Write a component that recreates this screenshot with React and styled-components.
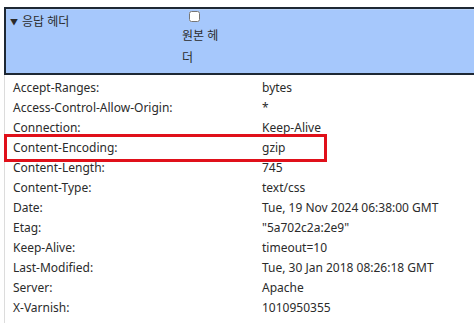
import React from "react";
import styled, { createGlobalStyle } from "styled-components";

const Global = createGlobalStyle`
  html, body { margin: 0; padding: 0; background: #fff; overflow: hidden; }
  body {
    font-family: "Noto Sans", "Noto Sans CJK KR", sans-serif;
    font-size: 12px;
    color: #2b2b2b;
  }
`;

const Panel = styled.div`
  width: 540px;
  padding: 7px 0 0 4px;
`;

const HeaderBar = styled.div`
  display: flex;
  align-items: flex-start;
  height: 64px;
  border: 2px solid #1e2834;
  background: #a6c8fc;
  box-shadow: inset 0 1px 0 #b8d2f8;
`;

const Toggle = styled.div`
  width: 172px;
  padding: 3px 0 0 4px;
  line-height: 20px;
  white-space: nowrap;
`;

const Caret = styled.span`
  font-size: 8px;
  margin-right: 4px;
  vertical-align: 1px;
`;

const RawToggle = styled.label`
  display: flex;
  flex-direction: column;
  align-items: flex-start;
  width: 42px;
`;

const Check = styled.input`
  margin: 2px 0 0 7px;
  width: 11px;
  height: 11px;
`;

const RawLabel = styled.span`
  margin-top: 3px;
  line-height: 22px;
  word-break: break-all;
`;

const Table = styled.div`
  position: relative;
  border-left: 1px solid #dcdcdc;
  padding: 3px 0 10px 8px;
`;

const Row = styled.div`
  position: relative;
  display: grid;
  grid-template-columns: 249px 1fr;
  height: 20px;
  line-height: 20px;
  white-space: nowrap;
`;

const Highlight = styled.div`
  position: absolute;
  left: -9px;
  top: -4px;
  width: 317px;
  height: 22px;
  border: 3px solid #e0101a;
  pointer-events: none;
`;

const headers = [
  ["Accept-Ranges:", "bytes"],
  ["Access-Control-Allow-Origin:", "*"],
  ["Connection:", "Keep-Alive"],
  ["Content-Encoding:", "gzip", true],
  ["Content-Length:", "745"],
  ["Content-Type:", "text/css"],
  ["Date:", "Tue, 19 Nov 2024 06:38:00 GMT"],
  ["Etag:", "\"5a702c2a:2e9\""],
  ["Keep-Alive:", "timeout=10"],
  ["Last-Modified:", "Tue, 30 Jan 2018 08:26:18 GMT"],
  ["Server:", "Apache"],
  ["X-Varnish:", "1010950355"],
];

export default function App() {
  return (
    <>
      <Global />
      <Panel>
        <HeaderBar>
          <Toggle>
            <Caret>▼</Caret>응답 헤더
          </Toggle>
          <RawToggle>
            <Check type="checkbox" />
            <RawLabel>원본 헤더</RawLabel>
          </RawToggle>
        </HeaderBar>
        <Table>
          {headers.map(([k, v, hl]) => (
            <Row key={k}>
              {hl && <Highlight />}
              <span>{k}</span>
              <span>{v}</span>
            </Row>
          ))}
        </Table>
      </Panel>
    </>
  );
}
